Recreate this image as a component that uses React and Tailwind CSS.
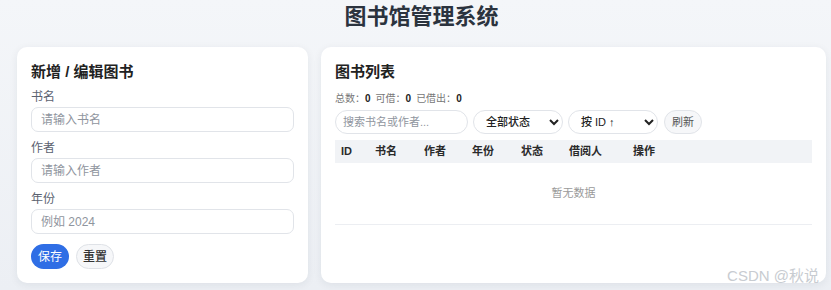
import { useState } from "react";

const font = { fontFamily: '"Liberation Sans", "Noto Sans CJK SC", sans-serif' };

function Field({ label, placeholder, value, onChange }) {
  return (
    <div className="flex flex-col">
      <label className="text-[12px] leading-[14px] text-[#5b6270] mb-[3px]">{label}</label>
      <input
        value={value}
        onChange={(e) => onChange(e.target.value)}
        placeholder={placeholder}
        className="h-[25px] w-full rounded-[7px] border border-[#e1e4e9] bg-white px-[9px] text-[12px] text-[#333] placeholder:text-[#8f959e] outline-none"
      />
    </div>
  );
}

export default function App() {
  const [title, setTitle] = useState("");
  const [author, setAuthor] = useState("");
  const [year, setYear] = useState("");
  const [search, setSearch] = useState("");
  const books = [];

  const cols = [
    ["ID", "w-[34px]"],
    ["书名", "w-[49px]"],
    ["作者", "w-[48px]"],
    ["年份", "w-[49px]"],
    ["状态", "w-[48px]"],
    ["借阅人", "w-[64px]"],
    ["操作", "flex-1"],
  ];

  return (
    <div
      style={font}
      className="relative h-[290px] w-full overflow-hidden bg-gradient-to-b from-[#f4f6f9] to-[#eceff4] pl-[17px] pr-[5px]"
    >
      {/* Header */}
      <h1 className="pt-[4px] text-center text-[22px] font-bold leading-[26px] text-[#2b333e]">
        图书馆管理系统
      </h1>

      <div className="mt-[17px] grid grid-cols-[291px_1fr] gap-[13px]">
        {/* Form card */}
        <div className="h-[236px] rounded-[10px] bg-white px-[14px] pt-[15px] shadow-[0_2px_8px_rgba(30,40,60,0.07)]">
          <h2 className="text-[15px] font-bold leading-[20px] text-[#222]">新增 / 编辑图书</h2>
          <div className="mt-[8px] flex flex-col gap-[9px]">
            <Field label="书名" placeholder="请输入书名" value={title} onChange={setTitle} />
            <Field label="作者" placeholder="请输入作者" value={author} onChange={setAuthor} />
            <Field label="年份" placeholder="例如 2024" value={year} onChange={setYear} />
          </div>
          <div className="mt-[10px] flex gap-[7px]">
            <button className="h-[25px] w-[38px] rounded-full bg-[#2f6ee5] text-[12px] text-white">
              保存
            </button>
            <button className="h-[25px] w-[38px] rounded-full border border-[#dfe2e7] bg-[#f6f7f9] text-[12px] font-medium text-[#333]">
              重置
            </button>
          </div>
        </div>

        {/* List card */}
        <div className="h-[236px] rounded-[10px] bg-white px-[14px] pt-[15px] shadow-[0_2px_8px_rgba(30,40,60,0.07)]">
          <h2 className="text-[15px] font-bold leading-[20px] text-[#222]">图书列表</h2>
          <div className="mt-[10px] flex items-center gap-[5px] text-[10px] leading-[14px] text-[#777]">
            <span>
              总数：<b className="text-[#222]">0</b>
            </span>
            <span>
              可借：<b className="text-[#222]">0</b>
            </span>
            <span>
              已借出：<b className="text-[#222]">0</b>
            </span>
          </div>
          <div className="mt-[4px] flex items-center gap-[5px]">
            <input
              value={search}
              onChange={(e) => setSearch(e.target.value)}
              placeholder="搜索书名或作者..."
              className="h-[24px] w-[133px] rounded-full border border-[#e1e4e9] px-[7px] text-[11px] placeholder:text-[#8f959e] outline-none"
            />
            <select className="h-[24px] w-[90px] rounded-full border border-[#e1e4e9] bg-white pl-[8px] pr-[4px] text-[11px] font-medium text-[#222] outline-none">
              <option>全部状态</option>
              <option>可借</option>
              <option>已借出</option>
            </select>
            <select className="h-[24px] w-[90px] rounded-full border border-[#e1e4e9] bg-white pl-[8px] pr-[4px] text-[11px] font-medium text-[#222] outline-none">
              <option>按 ID ↑</option>
              <option>按 ID ↓</option>
            </select>
            <button className="ml-[1px] h-[24px] w-[38px] rounded-full border border-[#e1e4e9] bg-[#f6f7f9] text-[11px] text-[#555]">
              刷新
            </button>
          </div>

          {/* Table */}
          <div className="mt-[6px]">
            <div className="flex h-[23px] items-center bg-[#f1f3f6] pl-[6px] text-[11px] font-bold text-[#2a2a2a]">
              {cols.map(([c, w]) => (
                <div key={c} className={w}>
                  {c}
                </div>
              ))}
            </div>
            {books.length === 0 && (
              <div className="flex h-[62px] items-center justify-center border-b border-[#eceef2] text-[11px] text-[#9a9a9a]">
                暂无数据
              </div>
            )}
          </div>
        </div>
      </div>

      {/* watermark */}
      <div className="pointer-events-none absolute bottom-[5px] right-[12px] text-[15px] leading-[18px] text-[#c8ccd1]">
        CSDN @秋说
      </div>
    </div>
  );
}
